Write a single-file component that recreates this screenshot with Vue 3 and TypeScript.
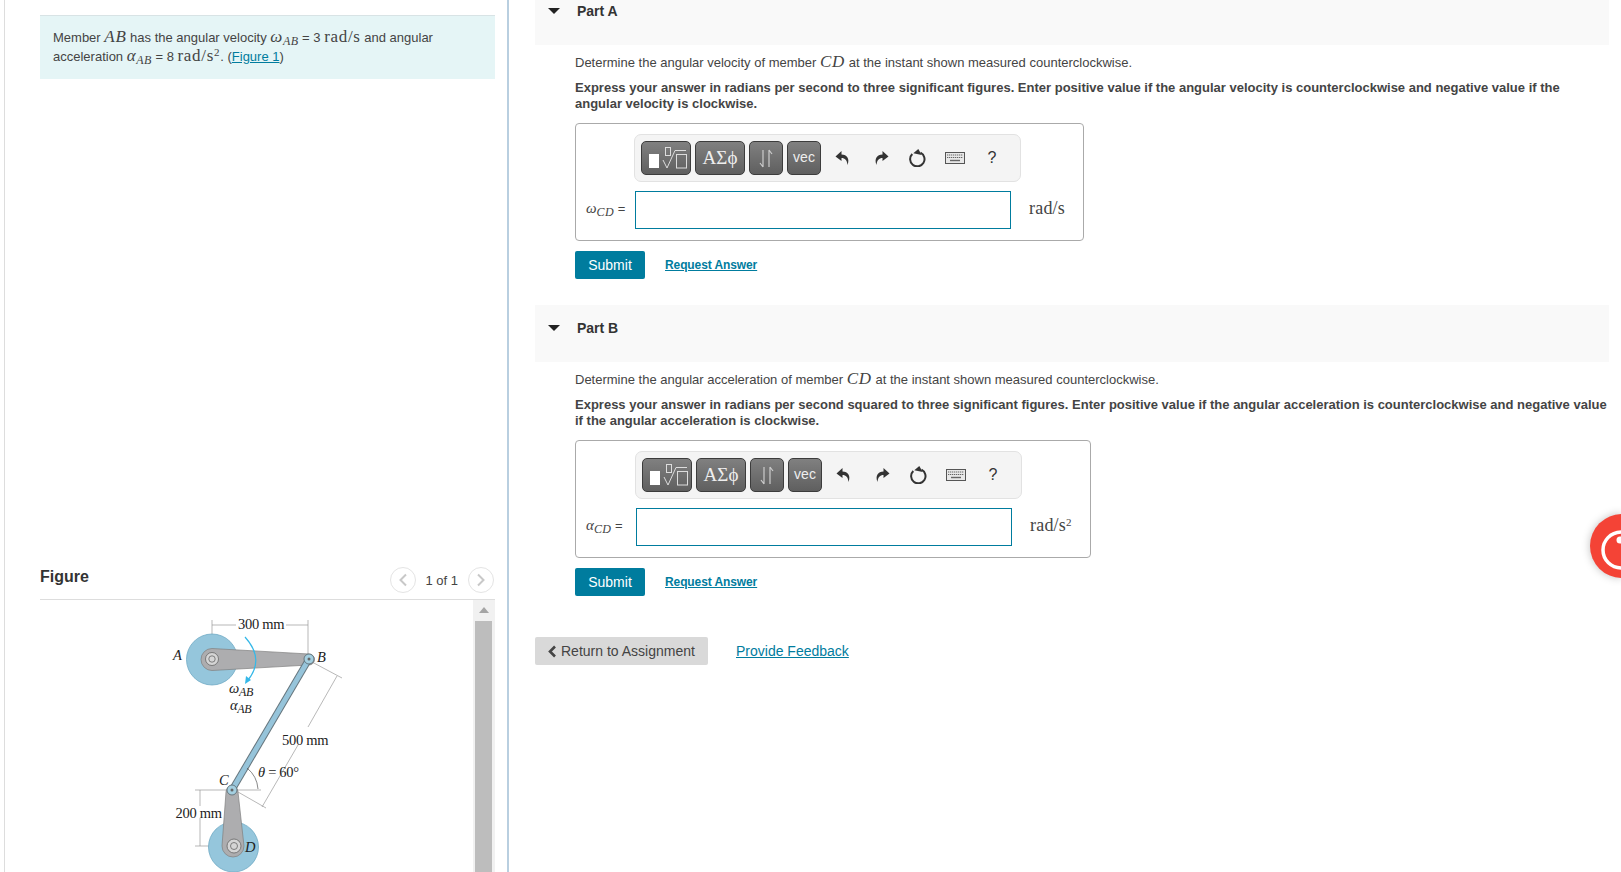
<script setup lang="ts">
interface Part {
  key: string
  title: string
  pre: string
  post: string
  express: string
  sym: string
  unitSup: boolean
}

const parts: Part[] = [
  {
    key: 'a',
    title: 'Part A',
    pre: 'Determine the angular velocity of member ',
    post: ' at the instant shown measured counterclockwise.',
    express:
      'Express your answer in radians per second to three significant figures. Enter positive value if the angular velocity is counterclockwise and negative value if the angular velocity is clockwise.',
    sym: 'ω',
    unitSup: false,
  },
  {
    key: 'b',
    title: 'Part B',
    pre: 'Determine the angular acceleration of member ',
    post: ' at the instant shown measured counterclockwise.',
    express:
      'Express your answer in radians per second squared to three significant figures. Enter positive value if the angular acceleration is counterclockwise and negative value if the angular acceleration is clockwise.',
    sym: 'α',
    unitSup: true,
  },
]
</script>

<template>
  <div class="page">
    <aside class="left">
      <div class="intro">
        Member <i class="m big">AB</i> has the angular velocity <i class="m big">ω</i><sub class="m"><i>AB</i></sub> = 3 <span class="m big">rad/s</span> and angular
        <br />acceleration <i class="m big">α</i><sub class="m"><i>AB</i></sub> = 8 <span class="m big">rad/s<sup>2</sup></span>. (<a class="link">Figure 1</a>)
      </div>

      <section class="figure">
        <header class="fig-head">
          <h2>Figure</h2>
          <div class="pager">
            <span class="round">
              <svg width="10" height="14" viewBox="0 0 10 14"><path d="M8 1.500 2.500 7 8 12.500" fill="none" stroke="#c8c8c8" stroke-width="2" /></svg>
            </span>
            <span class="count">1 of 1</span>
            <span class="round">
              <svg width="10" height="14" viewBox="0 0 10 14"><path d="M2 1.500 7.500 7 2 12.500" fill="none" stroke="#c8c8c8" stroke-width="2" /></svg>
            </span>
          </div>
        </header>
        <div class="fig-body">
          <svg class="diagram" width="433" height="272" viewBox="40 600 433 272">
            <g fill="none" stroke="#9a9a9a" stroke-width="0.7">
              <path d="M212 625H236M286 625H308M212 620V659M308 620V654" />
              <path d="M312 662 342 678M337 676 308 727M298 745 262 807M238 792 266 808" />
              <path d="M232 790H261M195 790H226M195 846H222M200 790V806M200 818V846" />
            </g>
            <circle cx="212" cy="659.500" r="25.500" fill="#95c6dc" stroke="#6fa9c4" stroke-width="0.8" />
            <circle cx="233.500" cy="847" r="25" fill="#95c6dc" stroke="#6fa9c4" stroke-width="0.8" />
            <path d="M212 648.500 309 654A5.500 5.500 0 0 1 309 665L212 670.500A11 11 0 0 1 212 648.500Z" fill="#adadaf" stroke="#808080" stroke-width="0.7" />
            <path d="M309 659 232 790" stroke="#66757d" stroke-width="7" />
            <path d="M309 659 232 790" stroke="#96c4da" stroke-width="5" />
            <path d="M226 792 222 846A11 11 0 0 0 244 846L238 792A6 6 0 0 0 226 792Z" fill="#adadaf" stroke="#808080" stroke-width="0.7" />
            <g fill="#d5d5d5" stroke="#666" stroke-width="0.8">
              <circle cx="212" cy="659" r="6.500" />
              <circle cx="212" cy="659" r="3.200" />
              <circle cx="234" cy="846" r="7" />
              <circle cx="234" cy="846" r="3.500" />
            </g>
            <g fill="#a4cfe0" stroke="#55646c" stroke-width="0.8">
              <circle cx="309" cy="659" r="5" />
              <circle cx="232" cy="790" r="5" />
            </g>
            <circle cx="309" cy="659" r="1.500" fill="#666" />
            <circle cx="232" cy="790" r="1.500" fill="#666" />
            <path d="M245 637Q265 659 248 680" fill="none" stroke="#35b8e8" stroke-width="1.200" />
            <path d="M245 684 246 676 251 680Z" fill="#35b8e8" />
            <path d="M258 789Q257 776 247 768" fill="none" stroke="#555" stroke-width="0.7" />
            <g class="dtext">
              <text x="238" y="629">300 mm</text>
              <text x="282" y="745">500 mm</text>
              <text x="175.500" y="818">200 mm</text>
              <text x="258" y="777"><tspan font-style="italic">θ</tspan> = 60°</text>
              <text x="173" y="660" class="it">A</text>
              <text x="317" y="662" class="it">B</text>
              <text x="219" y="785" class="it">C</text>
              <text x="245" y="852" class="it">D</text>
              <text x="229" y="693" class="it">ω<tspan class="sb" dy="3">AB</tspan></text>
              <text x="230" y="710" class="it">α<tspan class="sb" dy="3">AB</tspan></text>
            </g>
          </svg>
          <div class="scroll">
            <span class="up"></span>
            <span class="thumb"></span>
          </div>
        </div>
      </section>
    </aside>

    <main class="right">
      <section v-for="part in parts" :key="part.key" class="part">
        <header class="part-head">
          <span class="tri"></span>
          <h3>{{ part.title }}</h3>
        </header>
        <div class="part-body">
          <p class="q">{{ part.pre }}<i class="m cd">CD</i>{{ part.post }}</p>
          <p class="ex">{{ part.express }}</p>
          <div class="answer" :class="`answer-${part.key}`">
            <div class="tools">
              <button class="tb w50">
                <svg width="50" height="34" viewBox="0 0 50 34">
                  <rect x="8" y="13" width="10" height="14" fill="#fff" />
                  <rect x="24.500" y="6.500" width="5" height="8" fill="none" stroke="#ddd" />
                  <path d="M22 19 26 27 34 9.500H45" fill="none" stroke="#ddd" />
                  <rect x="35.500" y="13.500" width="10" height="13.500" fill="none" stroke="#ddd" />
                </svg>
              </button>
              <button class="tb w50 greek">ΑΣϕ</button>
              <button class="tb w34">
                <svg width="34" height="34" viewBox="0 0 34 34">
                  <path d="M14 9V26M14 26 11 22M20 26V9M20 9 23 13" fill="none" stroke="#ccc" stroke-width="1.200" />
                </svg>
              </button>
              <button class="tb w34 vec">vec</button>
              <span class="plain undo">
                <svg width="16" height="16" viewBox="0 0 16 16"><path d="M6.500 1 .5 6.500 6.500 11V8C10 8 12 10 12.500 15 15 9 12 4.500 6.500 4.500Z" fill="#333" /></svg>
              </span>
              <span class="plain">
                <svg width="16" height="16" viewBox="0 0 16 16"><path d="M9.500 1 15.500 6.500 9.500 11V8C6 8 4 10 3.500 15 1 9 4 4.500 9.500 4.500Z" fill="#333" /></svg>
              </span>
              <span class="plain reset">
                <svg width="18" height="18" viewBox="0 0 18 18">
                  <path d="M4.300 5A7.200 7.200 0 1 0 12.500 3.700" fill="none" stroke="#333" stroke-width="2" />
                  <path d="M10.300 0 13.700 6 5.300 4.300Z" fill="#333" />
                </svg>
              </span>
              <span class="plain kb">
                <svg width="20" height="12" viewBox="0 0 20 12">
                  <rect x=".5" y=".5" width="19" height="11" fill="#e8e8e8" stroke="#555" />
                  <path d="M2 3H18M2 5.500H18" stroke="#666" stroke-width="1.200" stroke-dasharray="1.300 .7" />
                  <path d="M5 8.500H15" stroke="#666" stroke-width="1.400" />
                </svg>
              </span>
              <span class="plain help">?</span>
            </div>
            <div class="row">
              <span class="lbl" :class="`lbl-${part.key}`"><i class="m sy">{{ part.sym }}</i><sub class="m"><i>CD</i></sub> =</span>
              <span class="input"></span>
              <span class="unit">rad/s<sup v-if="part.unitSup">2</sup></span>
            </div>
          </div>
          <div class="actions">
            <button class="submit">Submit</button>
            <a class="link req">Request Answer</a>
          </div>
        </div>
      </section>
      <footer class="foot">
        <button class="ret">
          <svg width="10" height="13" viewBox="0 0 10 13"><path d="M8 1.500 3 6.500 8 11.500" fill="none" stroke="#444" stroke-width="2.600" /></svg>
          Return to Assignment
        </button>
        <a class="link fb">Provide Feedback</a>
      </footer>
    </main>

    <div class="float-badge">
      <svg width="32" height="64" viewBox="0 0 32 64">
        <path d="M32 18C20 18 13 27 13 36 13 46 21 54 32 54" fill="none" stroke="#fff" stroke-width="3.500" />
        <circle cx="30" cy="26" r="3.500" fill="#fff" />
      </svg>
    </div>
  </div>
</template>

<style>
html,
body {
  margin: 0;
  overflow: hidden;
  background: #fff;
}
</style>

<style scoped>
.page {
  position: relative;
  display: flex;
  width: 1621px;
  height: 872px;
  overflow: hidden;
  font-family: "Liberation Sans", Arial, sans-serif;
  font-size: 12px;
  color: #444;
}
.m {
  font-family: "Liberation Serif", "DejaVu Serif", serif;
  line-height: 0;
}
.big {
  font-size: 17px;
  letter-spacing: 0.700px;
}
sub.m {
  font-size: 12px;
  letter-spacing: 0.400px;
  vertical-align: -3px;
}
sup {
  font-size: 11px;
  line-height: 0;
  vertical-align: 5px;
}
.link {
  color: #007c9e;
  text-decoration: underline;
}
.left {
  box-sizing: border-box;
  flex: none;
  display: flex;
  flex-direction: column;
  width: 505px;
  height: 872px;
  margin-left: 4px;
  padding: 15px 12px 0 35px;
  border-left: 1px solid #ddd;
  border-right: 2px solid #b9cfe0;
}
.intro {
  box-sizing: border-box;
  height: 64px;
  padding: 12px 13px 0;
  background: #e5f5f6;
  border-top: 1px solid #d8e3e5;
  line-height: 19px;
  font-size: 13px;
}
.figure {
  margin-top: auto;
}
.fig-head {
  display: flex;
  align-items: center;
  justify-content: space-between;
  box-sizing: border-box;
  height: 36px;
  padding-bottom: 10px;
  border-bottom: 1px solid #ddd;
}
.fig-head h2 {
  margin: 0;
  font-size: 16px;
  font-weight: 700;
  color: #333;
}
.pager {
  display: flex;
  align-items: center;
  gap: 9px;
  margin: 7px 1px 0 0;
}
.round {
  box-sizing: border-box;
  display: flex;
  align-items: center;
  justify-content: center;
  width: 26px;
  height: 26px;
  border: 1px solid #e4e4e4;
  border-radius: 50%;
}
.count {
  margin-right: 1px;
  font-size: 13px;
}
.fig-body {
  display: flex;
  height: 272px;
}
.diagram {
  display: block;
  flex: none;
}
.dtext text {
  font-family: "Liberation Serif", serif;
  font-size: 14.500px;
  letter-spacing: -0.300px;
  fill: #222;
}
.dtext .it {
  font-style: italic;
}
.dtext .sb {
  font-size: 12px;
}
.scroll {
  flex: 1;
  display: flex;
  flex-direction: column;
  align-items: center;
  background: #f1f1f1;
}
.up {
  width: 0;
  height: 0;
  margin: 7px 0 8px;
  border-left: 5px solid transparent;
  border-right: 5px solid transparent;
  border-bottom: 6px solid #a5a5a5;
}
.thumb {
  flex: 1;
  width: 17px;
  margin-right: 2px;
  background: #bdbdbd;
}
.right {
  flex: 1;
  min-width: 0;
  margin: -12px 12px 0 26px;
}
.part-head {
  display: flex;
  align-items: center;
  height: 57px;
  padding: 0 0 12px 13px;
  box-sizing: border-box;
  background: #f9f9f9;
}
.tri {
  width: 0;
  height: 0;
  margin-right: 17px;
  border-left: 6px solid transparent;
  border-right: 6px solid transparent;
  border-top: 6px solid #222;
}
.part-head h3 {
  margin: 0;
  font-size: 14px;
  font-weight: 700;
  color: #333;
}
.part-body {
  padding: 0 0 26px 40px;
}
.q {
  margin: 8px 0 0;
  height: 20px;
  line-height: 20px;
  font-size: 13px;
}
.cd {
  font-size: 17px;
  letter-spacing: 0.800px;
}
.ex {
  margin: 7px 0 0;
  line-height: 16px;
  font-size: 13px;
  font-weight: 700;
  color: #444;
}
.answer {
  box-sizing: border-box;
  width: fit-content;
  height: 118px;
  margin-top: 11px;
  padding: 10px 18px 0 10px;
  border: 1px solid #aaa;
  border-radius: 4px;
}
.tools {
  box-sizing: border-box;
  display: flex;
  align-items: center;
  width: 387px;
  height: 48px;
  margin-left: 48px;
  padding-left: 6px;
  background: #f4f4f4;
  border: 1px solid #e2e2e2;
  border-radius: 7px;
}
.answer-b .tools {
  margin-left: 49px;
}
.tb {
  box-sizing: border-box;
  flex: none;
  display: flex;
  align-items: center;
  justify-content: center;
  height: 34px;
  margin: 0 4px 0 0;
  padding: 0;
  border: 1px solid #3c3c3c;
  border-radius: 5px;
  background: linear-gradient(#808080, #5f5f5f);
  color: #eee;
}
.tb svg {
  margin: -1px;
}
.w50 {
  width: 50px;
}
.w34 {
  width: 34px;
}
.greek {
  font-family: "Liberation Serif", serif;
  font-size: 19px;
}
.vec {
  font-family: "Liberation Sans", sans-serif;
  font-size: 14px;
  padding-bottom: 3px;
}
.plain {
  display: flex;
  align-items: center;
  justify-content: center;
  flex: none;
  width: 38px;
}
.undo {
  margin-left: -1px;
}
.reset {
  margin-left: -2px;
}
.kb {
  width: 20px;
  margin: 0 0 0 9px;
}
.help {
  width: 16px;
  margin-left: 19px;
  font-size: 16px;
  color: #333;
}
.row {
  display: flex;
  align-items: center;
  height: 38px;
  margin-top: 9px;
}
.lbl {
  flex: none;
  width: 49px;
  margin-bottom: 4px;
  box-sizing: border-box;
  font-size: 13px;
  white-space: nowrap;
}
.lbl-b {
  width: 50px;
}
.sy {
  font-size: 15px;
}
.input {
  box-sizing: border-box;
  flex: none;
  width: 376px;
  height: 38px;
  background: #fff;
  border: 1px solid #007c9e;
}
.unit {
  margin: 0 0 4px 18px;
  font-family: "Liberation Serif", serif;
  font-size: 18px;
  letter-spacing: 0.200px;
  color: #444;
}
.actions {
  display: flex;
  align-items: center;
  gap: 20px;
  height: 28px;
  margin-top: 10px;
}
.submit {
  width: 70px;
  height: 28px;
  padding: 0;
  border: 0;
  border-radius: 2px;
  background: #007c9e;
  color: #fff;
  font-family: inherit;
  font-size: 14px;
}
.req {
  font-size: 12px;
  font-weight: 700;
  letter-spacing: -0.100px;
}
.foot {
  display: flex;
  align-items: center;
  gap: 28px;
  margin-top: 15px;
}
.ret {
  display: flex;
  align-items: center;
  gap: 4px;
  width: 173px;
  height: 28px;
  padding: 0 0 0 12px;
  border: 0;
  border-radius: 2px;
  background: #d9d9d9;
  color: #444;
  font-family: inherit;
  font-size: 14px;
}
.fb {
  font-size: 14px;
}
.float-badge {
  position: absolute;
  top: 514px;
  left: 1590px;
  width: 32px;
  height: 64px;
  border-radius: 32px 0 0 32px;
  background: #f44336;
  box-shadow: 0 0 8px rgba(0, 0, 0, 0.25);
}
</style>
